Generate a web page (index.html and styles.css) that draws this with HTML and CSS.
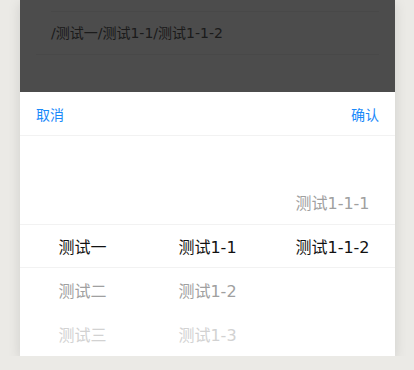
FILE: index.html
```html
<!DOCTYPE html>
<html lang="zh-CN">
<head>
  <meta charset="UTF-8">
  <title>级联选择</title>
  <link rel="stylesheet" href="styles.css">
</head>
<body>

<div class="phone">
  <div class="form">
    <div class="cell-line indent"></div>
    <div class="path">/测试一/测试1-1/测试1-1-2</div>
    <div class="cell-line"></div>
  </div>

  <div class="overlay"></div>

  <div class="popup">
    <div class="toolbar">
      <span class="btn">取消</span>
      <span class="btn">确认</span>
    </div>
    <div class="picker">
      <div class="column">
        <div class="item"></div>
        <div class="item"></div>
        <div class="item selected">测试一</div>
        <div class="item near">测试二</div>
        <div class="item far">测试三</div>
      </div>
      <div class="column">
        <div class="item"></div>
        <div class="item"></div>
        <div class="item selected">测试1-1</div>
        <div class="item near">测试1-2</div>
        <div class="item far">测试1-3</div>
      </div>
      <div class="column">
        <div class="item"></div>
        <div class="item near">测试1-1-1</div>
        <div class="item selected">测试1-1-2</div>
        <div class="item"></div>
        <div class="item"></div>
      </div>
      <div class="frame"></div>
    </div>
  </div>
</div>

</body>
</html>
```

FILE: styles.css
```css
body {
  margin: 0;
  background: #ebeae6;
  font-family: "DejaVu Sans", "Noto Sans CJK SC", sans-serif;
}

.phone {
  position: relative;
  width: 375px;
  height: 356px;
  margin-left: 20px;
  background: #fff;
  overflow: hidden;
  box-shadow: 0 3px 12px rgba(0, 0, 0, 0.12);
}

.form {
  padding-top: 11px;
}

.cell-line {
  height: 1px;
  margin: 0 16px;
  background: #f0f0f0;
}

.cell-line.indent {
  margin-left: 31px;
}

.path {
  height: 42px;
  line-height: 42px;
  padding-left: 31px;
  font-size: 14px;
  color: #5a5a5a;
}

.overlay {
  position: absolute;
  top: 0;
  left: 0;
  right: 0;
  bottom: 0;
  background: rgba(0, 0, 0, 0.7);
}

.popup {
  position: absolute;
  left: 0;
  right: 0;
  bottom: 0;
  background: #fff;
}

.toolbar {
  display: flex;
  justify-content: space-between;
  align-items: center;
  height: 43px;
  padding: 0 16px;
  border-bottom: 1px solid #f2f2f2;
}

.btn {
  font-size: 14px;
  color: #1989fa;
}

.picker {
  position: relative;
  display: flex;
  height: 220px;
}

.column {
  flex: 1;
}

.item {
  height: 44px;
  box-sizing: border-box;
  padding-top: 3px;
  line-height: 41px;
  text-align: center;
  font-size: 16px;
  color: #111;
}

.item.near {
  color: #a0a0a0;
}

.item.far {
  color: #d2d2d2;
}

.frame {
  position: absolute;
  left: 0;
  right: 0;
  top: 88px;
  height: 44px;
  border-top: 1px solid #f2f2f2;
  border-bottom: 1px solid #f2f2f2;
  box-sizing: border-box;
}
```
